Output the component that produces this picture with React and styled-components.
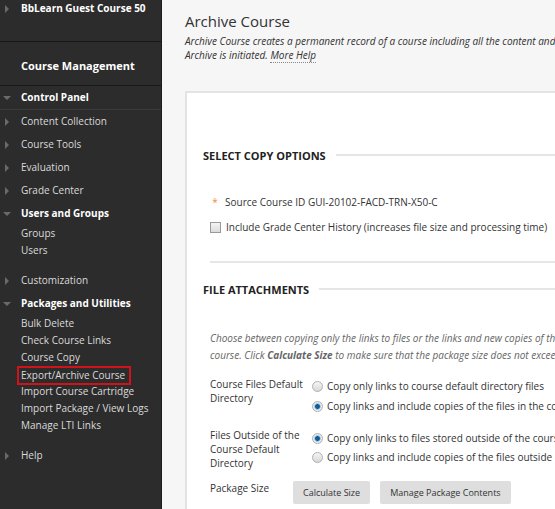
import React from "react";
import styled, { createGlobalStyle } from "styled-components";

const Global = createGlobalStyle`
  html, body {
    margin: 0;
    padding: 0;
    width: 555px;
    height: 509px;
    overflow: hidden;
    font-family: "Open Sans", "DejaVu Sans", sans-serif;
  }
`;

const Page = styled.div`
  display: flex;
  width: 555px;
  height: 509px;
  overflow: hidden;
  background: #f6f6f6;
`;

const Sidebar = styled.nav`
  flex: 0 0 161px;
  background: #2c2c2c;
  border-right: 1px solid #1c1c1c;
  color: #d9d9d9;
  font-size: 10px;
`;

const CourseTitle = styled.div`
  position: relative;
  height: 42px;
  box-sizing: border-box;
  padding: 1px 0 0 21px;
  border-bottom: 1px solid #161616;
  font-weight: 700;
  color: #fff;
  line-height: 15px;
`;

const MgmtTitle = styled.div`
  height: 44px;
  box-sizing: border-box;
  padding: 16px 0 0 21px;
  font-size: 11px;
  font-weight: 700;
  color: #fff;
  border-bottom: 1px solid #191919;
`;

const Arrow = styled.span`
  position: absolute;
  left: 5px;
  top: 50%;
  width: 0;
  height: 0;
  ${(p) =>
    p.$open
      ? `border-left: 4px solid transparent;
         border-right: 4px solid transparent;
         border-top: 4px solid #6a6a6a;
         margin-top: -2px;
         left: 3px;`
      : `border-top: 4px solid transparent;
         border-bottom: 4px solid transparent;
         border-left: 4px solid #6a6a6a;
         margin-top: -4px;`}
`;

const PanelHead = styled.div`
  position: relative;
  height: 24px;
  line-height: 22px;
  padding-left: 21px;
  font-weight: 700;
  color: #fff;
  border-bottom: 1px solid #3a3a3a;
  box-sizing: border-box;
`;

const Item = styled.div`
  position: relative;
  height: 23px;
  line-height: 23px;
  padding-left: 21px;
  font-weight: ${(p) => (p.$bold ? 700 : 400)};
  color: ${(p) => (p.$bold ? "#fff" : "#dadada")};
`;

const SubList = styled.div`
  padding-bottom: 10px;
`;

const SubItem = styled.div`
  height: 17px;
  line-height: 17px;
  padding-left: 21px;
  color: #dadada;
  white-space: nowrap;
`;

const Highlight = styled.span`
  display: inline-block;
  margin-left: -4px;
  padding: 0 4px 0 2px;
  line-height: 15px;
  border: 2px solid #d0121b;
`;

const Main = styled.main`
  flex: 1;
  padding: 10px 0 0 23px;
  color: #333;
  white-space: nowrap;
  overflow: hidden;
`;

const Title = styled.h1`
  margin: 0;
  font-size: 15px;
  font-weight: 400;
  line-height: 22px;
  color: #333;
`;

const Intro = styled.p`
  margin: 2px 0 0;
  font-size: 10px;
  font-style: italic;
  line-height: 14px;
  color: #333;
`;

const HelpLink = styled.span`
  border-bottom: 1px dotted #888;
`;

const Panel = styled.section`
  margin-top: 29px;
  width: 600px;
  height: 420px;
  background: #fff;
  border: 2px solid #e3e3e3;
  border-right: none;
  padding: 54px 0 0 16px;
  box-sizing: border-box;
  font-size: 10px;
`;

const SectionHead = styled.div`
  display: flex;
  align-items: center;
  gap: 10px;
  font-weight: 700;
  font-size: 11px;
  color: #222;
  height: 16px;
  &::after {
    content: "";
    flex: 1;
    border-top: 2px solid #e6e6e6;
  }
`;

const Fields = styled.div`
  padding: 31px 0 0 7px;
  display: flex;
  flex-direction: column;
  gap: 9px;
`;

const FieldRow = styled.div`
  display: flex;
  align-items: center;
  gap: 5px;
  height: 16px;
`;

const Star = styled.span`
  width: 10px;
  color: #f08a3c;
  font-size: 10px;
  text-align: center;
`;

const Box = styled.span`
  width: 9px;
  height: 9px;
  border: 1px solid #9a9a9a;
  background: linear-gradient(#f4f4f4, #dcdcdc);
`;

const Divider = styled.div`
  margin: 26px 0 18px 7px;
  border-top: 2px solid #e6e6e6;
`;

const Hint = styled.p`
  margin: 33px 0 0 7px;
  font-style: italic;
  color: #666;
  line-height: 17px;
`;

const FormGrid = styled.div`
  margin: 13px 0 0 7px;
  display: grid;
  grid-template-columns: 100px 1fr;
  row-gap: 11px;
  line-height: 14px;
`;

const Label = styled.div`
  color: #333;
  white-space: normal;
  width: 100px;
`;

const Options = styled.div`
  display: flex;
  flex-direction: column;
  gap: ${(p) => p.$gap}px;
  padding: ${(p) => p.$top}px 0 ${(p) => p.$bottom || 0}px;
`;

const Option = styled.div`
  display: flex;
  align-items: center;
  gap: 4px;
  height: 14px;
`;

const Radio = styled.span`
  width: 9px;
  height: 9px;
  border-radius: 50%;
  border: 1px solid #b0b0b0;
  background: ${(p) =>
    p.$checked
      ? "radial-gradient(circle, #0a5e9a 0 2px, #5ea2cf 2.5px, #e9e9e9 3.5px)"
      : "linear-gradient(#f5f5f5, #d8d8d8)"};
  margin-left: 2px;
`;

const Buttons = styled.div`
  display: flex;
  gap: 10px;
  margin-left: -17px;
`;

const Button = styled.button`
  font-family: inherit;
  font-size: 9px;
  color: #333;
  background: #dedede;
  border: none;
  border-radius: 2px;
  height: 23px;
  padding: 0 10px;
`;

function Side() {
  const tools = ["Content Collection", "Course Tools", "Evaluation", "Grade Center"];
  const pkgs = [
    "Bulk Delete",
    "Check Course Links",
    "Course Copy",
    "Export/Archive Course",
    "Import Course Cartridge",
    "Import Package / View Logs",
    "Manage LTI Links",
  ];
  return (
    <Sidebar>
      <CourseTitle>
        <Arrow style={{ top: 9 }} />
        BbLearn Guest Course 50
      </CourseTitle>
      <MgmtTitle>Course Management</MgmtTitle>
      <PanelHead>
        <Arrow $open />
        Control Panel
      </PanelHead>
      {tools.map((t) => (
        <Item key={t}>
          <Arrow />
          {t}
        </Item>
      ))}
      <Item $bold>
        <Arrow $open />
        Users and Groups
      </Item>
      <SubList>
        <SubItem>Groups</SubItem>
        <SubItem>Users</SubItem>
      </SubList>
      <Item>
        <Arrow />
        Customization
      </Item>
      <Item $bold>
        <Arrow $open />
        Packages and Utilities
      </Item>
      <SubList>
        {pkgs.map((p) => (
          <SubItem key={p}>
            {p === "Export/Archive Course" ? <Highlight>{p}</Highlight> : p}
          </SubItem>
        ))}
      </SubList>
      <Item>
        <Arrow />
        Help
      </Item>
    </Sidebar>
  );
}

export default function App() {
  return (
    <Page>
      <Global />
      <Side />
      <Main>
        <Title>Archive Course</Title>
        <Intro>
          Archive Course creates a permanent record of a course including all the content and user
          interactions available at the time the
          <br />
          Archive is initiated. <HelpLink>More Help</HelpLink>
        </Intro>
        <Panel>
          <SectionHead>SELECT COPY OPTIONS</SectionHead>
          <Fields>
            <FieldRow>
              <Star>*</Star>
              Source Course ID GUI-20102-FACD-TRN-X50-C
            </FieldRow>
            <FieldRow>
              <Box />
              Include Grade Center History (increases file size and processing time)
            </FieldRow>
          </Fields>
          <Divider />
          <SectionHead>FILE ATTACHMENTS</SectionHead>
          <Hint>
            Choose between copying only the links to files or the links and new copies of the files
            in the course default directory
            <br />
            course. Click <b>Calculate Size</b> to make sure that the package size does not exceed
            the maximum allowed.
          </Hint>
          <FormGrid>
            <Label>Course Files Default Directory</Label>
            <Options $top={2} $gap={6} $bottom={4}>
              <Option>
                <Radio />
                Copy only links to course default directory files
              </Option>
              <Option>
                <Radio $checked />
                Copy links and include copies of the files in the course default directory
              </Option>
            </Options>
            <Label>Files Outside of the Course Default Directory</Label>
            <Options $top={3} $gap={5}>
              <Option>
                <Radio $checked />
                Copy only links to files stored outside of the course default directory
              </Option>
              <Option>
                <Radio />
                Copy links and include copies of the files outside of the course default directory
              </Option>
            </Options>
            <Label>Package Size</Label>
            <Buttons>
              <Button>Calculate Size</Button>
              <Button>Manage Package Contents</Button>
            </Buttons>
          </FormGrid>
        </Panel>
      </Main>
    </Page>
  );
}
